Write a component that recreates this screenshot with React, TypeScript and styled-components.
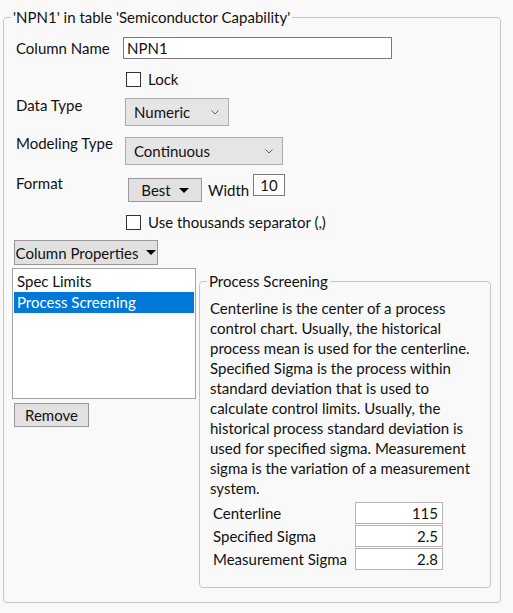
import { Fragment } from "react";
import styled, { createGlobalStyle } from "styled-components";

const GlobalStyle = createGlobalStyle`
  html, body {
    margin: 0;
    background: #f9f9f9;
  }
  body {
    font-family: Lato, "Liberation Sans", sans-serif;
    font-size: 15px;
    color: #111;
  }
`;

const Frame = styled.fieldset`
  box-sizing: border-box;
  width: 498px;
  min-width: 0;
  margin: 7px 0 0 3px;
  padding: 10px 8px 14px 8px;
  border: 1px solid #c6c6c6;
  border-radius: 4px;
`;

const Caption = styled.legend<{ $shift: number }>`
  margin-left: ${(p) => p.$shift}px;
  padding: 0 2px;
  line-height: 20px;
  white-space: nowrap;
`;

const Row = styled.div<{ $top?: number }>`
  display: flex;
  align-items: flex-start;
  margin-top: ${(p) => p.$top ?? 0}px;
`;

const Label = styled.div<{ $drop?: number }>`
  flex: none;
  width: 107px;
  margin: ${(p) => p.$drop ?? 0}px 0 0 4px;
  line-height: 20px;
  white-space: nowrap;
`;

const TextField = styled.div<{ $w: number }>`
  box-sizing: border-box;
  width: ${(p) => p.$w}px;
  height: 22px;
  padding: 0 3px;
  border: 1px solid #7a7a7a;
  background: #fff;
  line-height: 20px;
`;

const CheckLine = styled.label<{ $left: number }>`
  display: flex;
  align-items: center;
  margin-left: ${(p) => p.$left}px;
  line-height: 15px;
`;

const Box = styled.span`
  box-sizing: border-box;
  width: 15px;
  height: 15px;
  margin-right: 7px;
  border: 1px solid #333;
  background: #fff;
`;

const Select = styled.div<{ $w: number; $top: number; $left: number }>`
  box-sizing: border-box;
  display: flex;
  align-items: center;
  justify-content: space-between;
  width: ${(p) => p.$w}px;
  height: 28px;
  margin: ${(p) => p.$top}px 0 0 ${(p) => p.$left}px;
  padding: 0 9px 0 8px;
  border: 1px solid #adadad;
  background: #e5e5e5;
`;

const Button = styled.button<{ $w: number; $h: number; $top?: number; $left?: number }>`
  box-sizing: border-box;
  display: flex;
  align-items: center;
  justify-content: center;
  gap: 8px;
  width: ${(p) => p.$w}px;
  height: ${(p) => p.$h}px;
  margin: ${(p) => p.$top ?? 0}px 0 0 ${(p) => p.$left ?? 0}px;
  padding: 0;
  border: 1px solid #999;
  background: #e1e1e1;
  font: inherit;
  color: inherit;
  line-height: 20px;
`;

const WidthLabel = styled.span`
  flex: none;
  width: 45px;
  margin: 7px 0 0 6px;
  line-height: 20px;
`;

const WidthBox = styled(TextField)`
  margin-top: 1px;
  text-align: center;
`;

const Split = styled.div`
  display: flex;
  align-items: flex-start;
  margin-top: 3px;
`;

const Side = styled.div`
  display: flex;
  flex-direction: column;
  align-items: flex-start;
`;

const List = styled.ul`
  box-sizing: border-box;
  width: 184px;
  height: 131px;
  margin: 0;
  padding: 2px 1px;
  list-style: none;
  border: 1px solid #a5a5a5;
  background: #fff;
`;

const Item = styled.li<{ $on?: boolean }>`
  height: 21px;
  padding-left: 3px;
  line-height: 21px;
  background: ${(p) => (p.$on ? "#0078d7" : "transparent")};
  color: ${(p) => (p.$on ? "#fff" : "inherit")};
`;

const Panel = styled.fieldset`
  box-sizing: border-box;
  width: 292px;
  min-width: 0;
  margin: 3px 0 0 3px;
  padding: 7px 8px 17px 10px;
  border: 1px solid #c6c6c6;
  border-radius: 4px;
`;

const Note = styled.p`
  margin: 0;
  line-height: 20px;
`;

const Line = styled.span`
  display: block;
  white-space: nowrap;
`;

const Table = styled.div`
  display: grid;
  grid-template-columns: 142px 88px;
  row-gap: 1px;
  margin: 4px 0 0 3px;
`;

const Cell = styled.div`
  line-height: 22px;
  white-space: nowrap;
`;

const Value = styled.div`
  box-sizing: border-box;
  height: 22px;
  padding-right: 4px;
  border: 1px solid #b4b4b4;
  background: #fff;
  line-height: 20px;
  text-align: right;
`;

const Chevron = () => (
  <svg width="8" height="5" viewBox="0 0 8 5">
    <polyline points="0.5,0.5 4,4 7.5,0.5" fill="none" stroke="#606060" strokeWidth="1" />
  </svg>
);

const Caret = () => (
  <svg width="10" height="5" viewBox="0 0 10 5">
    <polygon points="0,0 10,0 5,5" fill="#000" />
  </svg>
);

const note = [
  "Centerline is the center of a process",
  "control chart. Usually, the historical",
  "process mean is used for the centerline.",
  "Specified Sigma is the process within",
  "standard deviation that is used to",
  "calculate control limits. Usually, the",
  "historical process standard deviation is",
  "used for specified sigma. Measurement",
  "sigma is the variation of a measurement",
  "system.",
];

const values = [
  { name: "Centerline", value: "115" },
  { name: "Specified Sigma", value: "2.5" },
  { name: "Measurement Sigma", value: "2.8" },
];

function App() {
  return (
    <>
      <GlobalStyle />
      <Frame>
        <Caption $shift={-1}>'NPN1' in table 'Semiconductor Capability'</Caption>

        <Row>
          <Label $drop={1}>Column Name</Label>
          <TextField $w={269}>NPN1</TextField>
        </Row>

        <Row $top={13}>
          <CheckLine $left={114}>
            <Box />
            Lock
          </CheckLine>
        </Row>

        <Row $top={8}>
          <Label>Data Type</Label>
          <Select $w={104} $top={3} $left={2}>
            Numeric
            <Chevron />
          </Select>
        </Row>

        <Row $top={7}>
          <Label>Modeling Type</Label>
          <Select $w={158} $top={4} $left={2}>
            Continuous
            <Chevron />
          </Select>
        </Row>

        <Row $top={8}>
          <Label>Format</Label>
          <Button $w={74} $h={24} $top={5} $left={5}>
            Best
            <Caret />
          </Button>
          <WidthLabel>Width</WidthLabel>
          <WidthBox $w={32}>10</WidthBox>
        </Row>

        <Row $top={13}>
          <CheckLine $left={114}>
            <Box />
            Use thousands separator (,)
          </CheckLine>
        </Row>

        <Row $top={10}>
          <Button $w={144} $h={25} $left={2}>
            Column Properties
            <Caret />
          </Button>
        </Row>

        <Split>
          <Side>
            <List>
              <Item>Spec Limits</Item>
              <Item $on>Process Screening</Item>
            </List>
            <Button $w={75} $h={24} $top={4} $left={2}>
              Remove
            </Button>
          </Side>

          <Panel>
            <Caption $shift={-3}>Process Screening</Caption>
            <Note>
              {note.map((line) => (
                <Line key={line}>{line}</Line>
              ))}
            </Note>
            <Table>
              {values.map((v) => (
                <Fragment key={v.name}>
                  <Cell>{v.name}</Cell>
                  <Value>{v.value}</Value>
                </Fragment>
              ))}
            </Table>
          </Panel>
        </Split>
      </Frame>
    </>
  );
}

export default App;
